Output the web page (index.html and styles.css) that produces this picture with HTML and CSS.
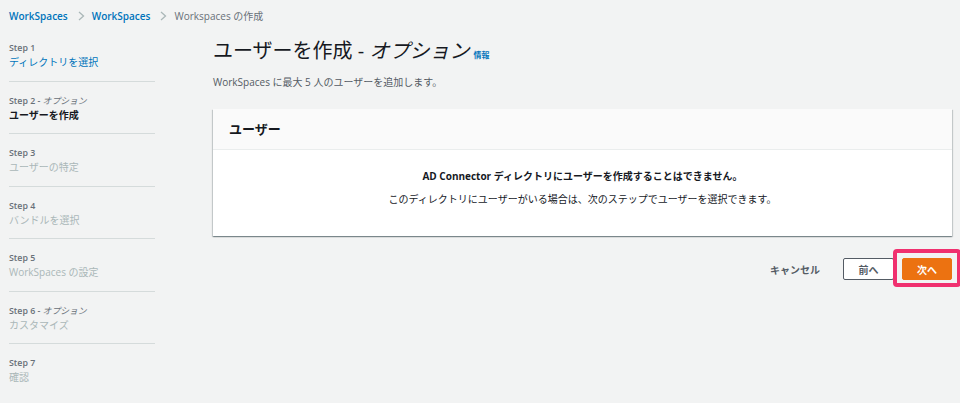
FILE: index.html
```html
<!DOCTYPE html>
<html lang="ja">
<head>
<meta charset="utf-8">
<title>ユーザーを作成</title>
<link rel="stylesheet" href="styles.css">
</head>
<body>
<div class="page">
  <nav class="breadcrumb">
    <a class="crumb-link" href="#">WorkSpaces</a>
    <span class="chev"><svg width="7" height="10" viewBox="0 0 7 10"><path d="M1 1l4.5 4L1 9" fill="none" stroke="#aab7b8" stroke-width="1.3"/></svg></span>
    <a class="crumb-link" href="#">WorkSpaces</a>
    <span class="chev"><svg width="7" height="10" viewBox="0 0 7 10"><path d="M1 1l4.5 4L1 9" fill="none" stroke="#aab7b8" stroke-width="1.3"/></svg></span>
    <span class="crumb-current">Workspaces の作成</span>
  </nav>
  <div class="layout">
    <ol class="steps">
      <li class="step"><div class="step-label">Step 1</div><a class="step-title link" href="#">ディレクトリを選択</a></li>
      <li class="step"><div class="step-label">Step 2 - <em>オプション</em></div><div class="step-title current">ユーザーを作成</div></li>
      <li class="step"><div class="step-label">Step 3</div><div class="step-title disabled">ユーザーの特定</div></li>
      <li class="step"><div class="step-label">Step 4</div><div class="step-title disabled">バンドルを選択</div></li>
      <li class="step"><div class="step-label">Step 5</div><div class="step-title disabled">WorkSpaces の設定</div></li>
      <li class="step"><div class="step-label">Step 6 - <em>オプション</em></div><div class="step-title disabled">カスタマイズ</div></li>
      <li class="step"><div class="step-label">Step 7</div><div class="step-title disabled">確認</div></li>
    </ol>
    <main class="main">
      <h1 class="title">ユーザーを作成 - <em>オプション</em><a class="info" href="#">情報</a></h1>
      <p class="desc">WorkSpaces に最大 5 人のユーザーを追加します。</p>
      <section class="panel">
        <header class="panel-header"><h2 class="panel-title">ユーザー</h2></header>
        <div class="panel-body">
          <p class="msg-strong">AD Connector ディレクトリにユーザーを作成することはできません。</p>
          <p class="msg">このディレクトリにユーザーがいる場合は、次のステップでユーザーを選択できます。</p>
        </div>
      </section>
      <div class="actions">
        <button class="btn-link">キャンセル</button>
        <button class="btn-normal">前へ</button>
        <span class="highlight"><button class="btn-primary">次へ</button></span>
      </div>
    </main>
  </div>
</div>
</body>
</html>
```

FILE: styles.css
```css
* { box-sizing: border-box; }
html, body { margin: 0; padding: 0; }
body {
  background: #f2f3f3;
  color: #16191f;
  font-family: "Open Sans", "Noto Sans CJK JP", sans-serif;
  font-size: 10px;
  width: 960px;
  height: 403px;
  overflow: hidden;
}
a { text-decoration: none; }
.page { padding: 0 8px 0 9px; }

.breadcrumb {
  display: flex;
  align-items: center;
  padding-top: 9px;
  height: 23px;
  line-height: 14px;
  font-size: 10px;
}
.crumb-link { color: #0073bb; font-weight: 600; }
.chev { display: inline-flex; margin: 0 7px 0 10px; }
.crumb-current { color: #687078; }

.layout {
  display: grid;
  grid-template-columns: 146px 1fr;
  column-gap: 58px;
  margin-top: 6px;
}

.steps { list-style: none; margin: 0; padding: 0; }
.step {
  padding: 13px 0 11.5px;
  border-bottom: 1px solid #d5dbdb;
}
.step:last-child { border-bottom: none; }
.step-label {
  font-size: 8.8px;
  line-height: 13px;
  color: #687078;
  font-weight: 600;
}
.step-label em { font-weight: 400; }
.step-title { display: block; font-size: 10px; line-height: 14px; }
.step-title.link { color: #0073bb; }
.step-title.current { font-weight: 700; color: #16191f; }
.step-title.disabled { color: #aab7b8; }

.main { display: flex; flex-direction: column; }
.title {
  margin: 9px 0 0;
  font-size: 20px;
  line-height: 26px;
  font-weight: 400;
  color: #16191f;
}
.title em { font-style: italic; }
.info {
  color: #0073bb;
  font-size: 8px;
  font-weight: 700;
  margin-left: 4px;
}
.desc {
  margin: 7px 0 0;
  font-size: 10px;
  line-height: 14px;
  color: #545b64;
}

.panel {
  margin-top: 20px;
  background: #fff;
  box-shadow: 0 1px 1px 0 rgba(0,28,36,.3), 1px 1px 1px 0 rgba(0,28,36,.15), -1px 1px 1px 0 rgba(0,28,36,.15);
}
.panel-header {
  background: #fafafa;
  border-bottom: 1px solid #eaeded;
  height: 41px;
  display: flex;
  align-items: center;
  padding: 0 16px;
}
.panel-title { margin: 0; font-size: 13px; font-weight: 700; line-height: 18px; }
.panel-body {
  padding: 19px 16px 30px;
  text-align: center;
}
.msg-strong { margin: 0; font-weight: 700; font-size: 10px; line-height: 14px; }
.msg { margin: 9px 0 0; font-size: 10px; line-height: 14px; color: #16191f; }

.actions {
  margin-top: 22px;
  display: flex;
  justify-content: flex-end;
  align-items: center;
  gap: 8px;
}
button {
  font-family: inherit;
  font-size: 10px;
  font-weight: 700;
  height: 22px;
  border-radius: 2px;
  cursor: pointer;
}
.btn-link {
  background: none;
  border: none;
  color: #545b64;
  padding: 0 15px;
}
.btn-normal {
  background: #fff;
  border: 1px solid #545b64;
  color: #545b64;
  width: 51px;
  padding: 0;
}
.highlight { position: relative; display: inline-flex; }
.highlight::after {
  content: "";
  position: absolute;
  top: -9px;
  bottom: -7px;
  left: -9px;
  right: -9px;
  border: 4px solid #f0306f;
  border-radius: 4px;
}
.btn-primary {
  background: #ec7211;
  border: 1px solid #ec7211;
  color: #fff;
  width: 50px;
  padding: 0;
}
```
